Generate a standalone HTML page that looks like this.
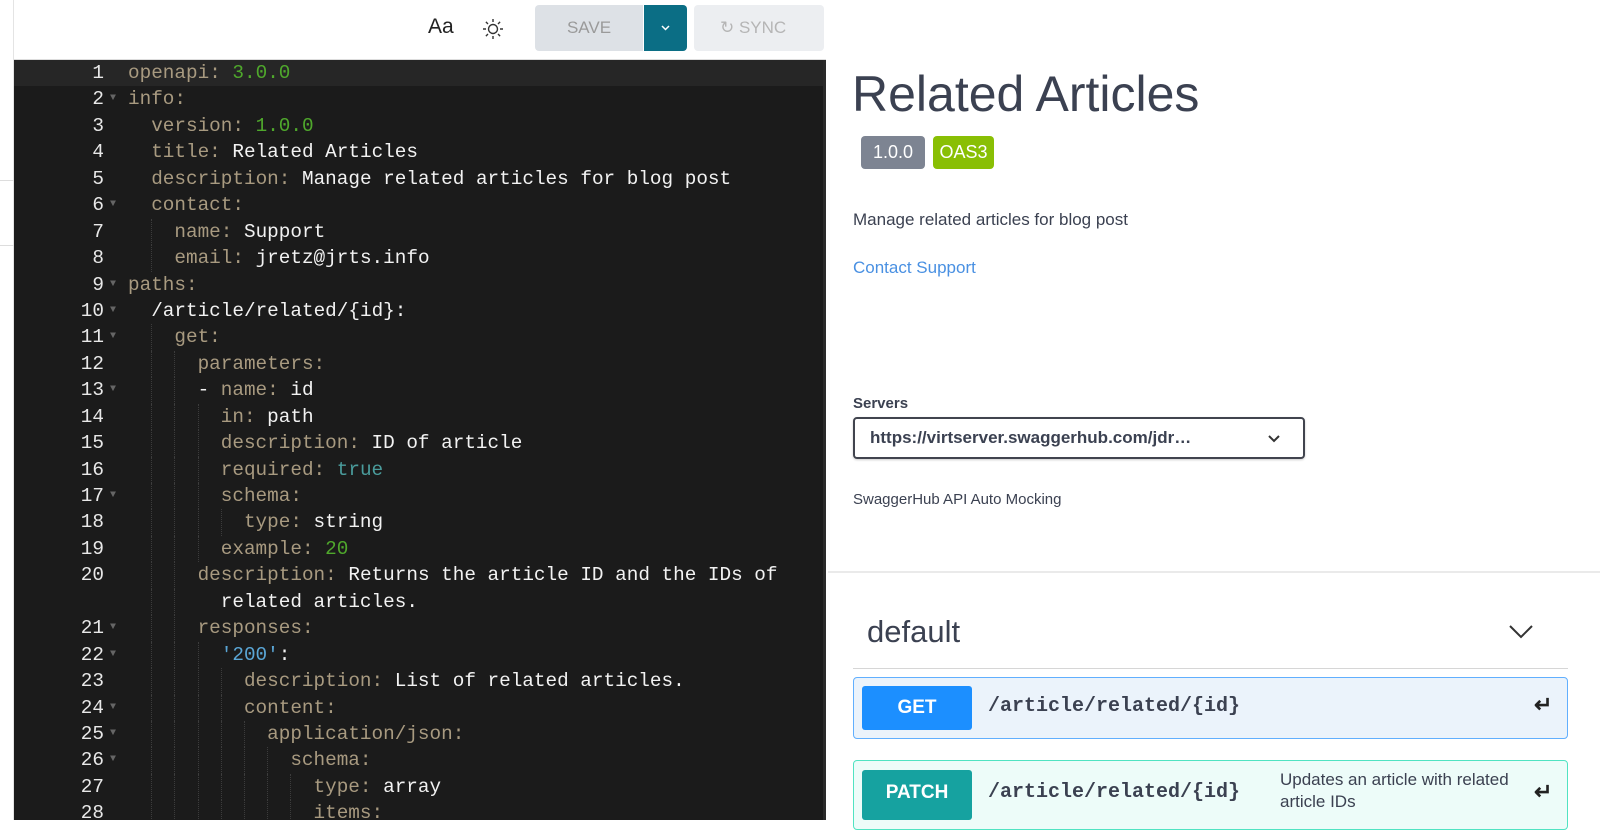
<!DOCTYPE html>
<html><head><meta charset="utf-8"><style>
*{margin:0;padding:0;box-sizing:border-box}
body{width:1600px;height:820px;overflow:hidden;background:#fff;font-family:"Liberation Sans",sans-serif;position:relative}
.strip{position:absolute;left:0;top:0;width:14px;height:820px;background:#fff;border-right:1px solid #e4e4e4}
.strip i{position:absolute;left:0;width:14px;height:1px;background:#ddd}
.tb{position:absolute;left:14px;top:0;width:812px;height:60px;background:#fff;border-bottom:1px solid #ddd}
.ed{position:absolute;left:14px;top:60px;width:812px;height:760px;background:#1b1b1b;border-right:3px solid #2a2a2a;overflow:hidden}
.rows{position:absolute;left:0;top:0;width:809px;font-family:"Liberation Mono",monospace;font-size:19.33px;line-height:26.45px;color:#f2f2f2}
.r{position:relative;height:26.45px;overflow:hidden}
.r.act{background:#262626}
.n{position:absolute;left:0;width:90px;text-align:right;color:#e8e8e8}
.f{position:absolute;left:96px;top:0;color:#666;font-size:10px}
.c{position:absolute;left:114px;top:0;white-space:pre;height:26.45px}
.k{color:#a89a80}.g{color:#4fa82c}.t{color:#4a9c9c}.b{color:#5aa6d6}
.ig{display:inline-block;width:23.2px;height:26.45px;vertical-align:top;border-left:1px dotted #3c3c3c}
.ig0{display:inline-block;width:23.2px;height:26.45px;vertical-align:top}
.rp{position:absolute;left:828px;top:0;width:772px;height:820px;background:#fff;color:#3b4151}
</style></head><body>
<div class="strip"><i style="top:180px"></i><i style="top:245px"></i></div>
<div class="tb">
 <div style="position:absolute;left:414px;top:15px;font-size:21px;color:#222">Aa</div>
 <svg style="position:absolute;left:467px;top:17px" width="24" height="24" viewBox="0 0 24 24" fill="none" stroke="#333" stroke-width="1.4"><circle cx="12" cy="12" r="4.5"/><path d="M12 2v3M12 19v3M2 12h3M19 12h3M4.9 4.9l2.1 2.1M17 17l2.1 2.1M4.9 19.1l2.1-2.1M17 7l2.1-2.1"/></svg>
 <div style="position:absolute;left:521px;top:5px;width:108px;height:46px;background:#dde1e6;border-radius:4px 0 0 4px;color:#9a9a9a;font-size:17px;text-align:center;line-height:46px">SAVE</div>
 <div style="position:absolute;left:630px;top:5px;width:43px;height:46px;background:#0b6e85;border-radius:0 4px 4px 0"><svg style="position:absolute;left:16px;top:19px" width="11" height="8" viewBox="0 0 11 8"><path d="M2 2l3.5 3.5L9 2" stroke="#fff" stroke-width="1.5" fill="none"/></svg></div>
 <div style="position:absolute;left:680px;top:5px;width:130px;height:46px;background:#eceef1;border-radius:4px;color:#b5b5b5;font-size:17px;line-height:46px;padding-left:26px">&#x21bb; SYNC</div>
</div>
<div class="ed">
<div class="rows">
<div class="r act"><span class="n">1</span><span class="c"><span class="k">openapi:</span> <span class="g">3.0.0</span></span></div>
<div class="r"><span class="n">2</span><span class="f">▼</span><span class="c"><span class="k">info:</span></span></div>
<div class="r"><span class="n">3</span><span class="c"><i class="ig0"></i><span class="k">version:</span> <span class="g">1.0.0</span></span></div>
<div class="r"><span class="n">4</span><span class="c"><i class="ig0"></i><span class="k">title:</span> Related Articles</span></div>
<div class="r"><span class="n">5</span><span class="c"><i class="ig0"></i><span class="k">description:</span> Manage related articles for blog post</span></div>
<div class="r"><span class="n">6</span><span class="f">▼</span><span class="c"><i class="ig0"></i><span class="k">contact:</span></span></div>
<div class="r"><span class="n">7</span><span class="c"><i class="ig0"></i><i class="ig"></i><span class="k">name:</span> Support</span></div>
<div class="r"><span class="n">8</span><span class="c"><i class="ig0"></i><i class="ig"></i><span class="k">email:</span> jretz@jrts.info</span></div>
<div class="r"><span class="n">9</span><span class="f">▼</span><span class="c"><span class="k">paths:</span></span></div>
<div class="r"><span class="n">10</span><span class="f">▼</span><span class="c"><i class="ig0"></i>/article/related/{id}:</span></div>
<div class="r"><span class="n">11</span><span class="f">▼</span><span class="c"><i class="ig0"></i><i class="ig"></i><span class="k">get:</span></span></div>
<div class="r"><span class="n">12</span><span class="c"><i class="ig0"></i><i class="ig"></i><i class="ig"></i><span class="k">parameters:</span></span></div>
<div class="r"><span class="n">13</span><span class="f">▼</span><span class="c"><i class="ig0"></i><i class="ig"></i><i class="ig"></i>- <span class="k">name:</span> id</span></div>
<div class="r"><span class="n">14</span><span class="c"><i class="ig0"></i><i class="ig"></i><i class="ig"></i><i class="ig"></i><span class="k">in:</span> path</span></div>
<div class="r"><span class="n">15</span><span class="c"><i class="ig0"></i><i class="ig"></i><i class="ig"></i><i class="ig"></i><span class="k">description:</span> ID of article</span></div>
<div class="r"><span class="n">16</span><span class="c"><i class="ig0"></i><i class="ig"></i><i class="ig"></i><i class="ig"></i><span class="k">required:</span> <span class="t">true</span></span></div>
<div class="r"><span class="n">17</span><span class="f">▼</span><span class="c"><i class="ig0"></i><i class="ig"></i><i class="ig"></i><i class="ig"></i><span class="k">schema:</span></span></div>
<div class="r"><span class="n">18</span><span class="c"><i class="ig0"></i><i class="ig"></i><i class="ig"></i><i class="ig"></i><i class="ig"></i><span class="k">type:</span> string</span></div>
<div class="r"><span class="n">19</span><span class="c"><i class="ig0"></i><i class="ig"></i><i class="ig"></i><i class="ig"></i><span class="k">example:</span> <span class="g">20</span></span></div>
<div class="r"><span class="n">20</span><span class="c"><i class="ig0"></i><i class="ig"></i><i class="ig"></i><span class="k">description:</span> Returns the article ID and the IDs of</span></div>
<div class="r"><span class="c"><i class="ig0"></i><i class="ig"></i><i class="ig"></i><i class="ig0"></i>related articles.</span></div>
<div class="r"><span class="n">21</span><span class="f">▼</span><span class="c"><i class="ig0"></i><i class="ig"></i><i class="ig"></i><span class="k">responses:</span></span></div>
<div class="r"><span class="n">22</span><span class="f">▼</span><span class="c"><i class="ig0"></i><i class="ig"></i><i class="ig"></i><i class="ig"></i><span class="b">'200'</span>:</span></div>
<div class="r"><span class="n">23</span><span class="c"><i class="ig0"></i><i class="ig"></i><i class="ig"></i><i class="ig"></i><i class="ig"></i><span class="k">description:</span> List of related articles.</span></div>
<div class="r"><span class="n">24</span><span class="f">▼</span><span class="c"><i class="ig0"></i><i class="ig"></i><i class="ig"></i><i class="ig"></i><i class="ig"></i><span class="k">content:</span></span></div>
<div class="r"><span class="n">25</span><span class="f">▼</span><span class="c"><i class="ig0"></i><i class="ig"></i><i class="ig"></i><i class="ig"></i><i class="ig"></i><i class="ig"></i><span class="k">application/json:</span></span></div>
<div class="r"><span class="n">26</span><span class="f">▼</span><span class="c"><i class="ig0"></i><i class="ig"></i><i class="ig"></i><i class="ig"></i><i class="ig"></i><i class="ig"></i><i class="ig"></i><span class="k">schema:</span></span></div>
<div class="r"><span class="n">27</span><span class="c"><i class="ig0"></i><i class="ig"></i><i class="ig"></i><i class="ig"></i><i class="ig"></i><i class="ig"></i><i class="ig"></i><i class="ig"></i><span class="k">type:</span> array</span></div>
<div class="r"><span class="n">28</span><span class="c"><i class="ig0"></i><i class="ig"></i><i class="ig"></i><i class="ig"></i><i class="ig"></i><i class="ig"></i><i class="ig"></i><i class="ig"></i><span class="k">items:</span></span></div>
</div></div>
<div class="rp">
 <div style="position:absolute;left:24px;top:64px;font-size:50px;color:#3b4151;line-height:60px">Related Articles</div>
 <div style="position:absolute;left:33px;top:136px;width:64px;height:33px;background:#7d8492;border-radius:4px;color:#fff;font-size:18px;line-height:33px;text-align:center">1.0.0</div>
 <div style="position:absolute;left:105px;top:136px;width:61px;height:33px;background:#89bf04;border-radius:4px;color:#fff;font-size:18px;line-height:33px;text-align:center">OAS3</div>
 <div style="position:absolute;left:25px;top:210px;font-size:17px">Manage related articles for blog post</div>
 <div style="position:absolute;left:25px;top:258px;font-size:17px;color:#4990e2">Contact Support</div>
 <div style="position:absolute;left:25px;top:395px;font-size:15px;font-weight:bold">Servers</div>
 <div style="position:absolute;left:25px;top:417px;width:452px;height:42px;border:2px solid #41444e;border-radius:4px;box-shadow:0 1px 2px rgba(0,0,0,.2);font-size:17px;font-weight:bold;line-height:38px;padding-left:15px">https://virtserver.swaggerhub.com/jdr…<svg style="position:absolute;left:412px;top:15px" width="14" height="9" viewBox="0 0 14 9"><path d="M2 2l5 5 5-5" stroke="#333" stroke-width="2" fill="none"/></svg></div>
 <div style="position:absolute;left:25px;top:491px;font-size:15px">SwaggerHub API Auto Mocking</div>
 <div style="position:absolute;left:0;top:571px;width:772px;height:2px;background:#eaeaea"></div>
 <div style="position:absolute;left:39px;top:614px;font-size:31px">default</div>
 <svg style="position:absolute;left:680px;top:623px" width="26" height="16" viewBox="0 0 26 16"><path d="M2 3l11 11L24 3" stroke="#333" stroke-width="2" fill="none"/></svg>
 <div style="position:absolute;left:25px;top:668px;width:715px;height:1px;background:#d6d6d6"></div>
 <div style="position:absolute;left:25px;top:677px;width:715px;height:62px;border:1px solid #61affe;background:#ebf3fb;border-radius:4px">
  <div style="position:absolute;left:8px;top:8px;width:110px;height:44px;background:#1c8fff;border-radius:3px;color:#fff;font-weight:bold;font-size:19px;line-height:44px;text-align:center">GET</div>
  <div style="position:absolute;left:134px;top:17px;font-family:'Liberation Mono',monospace;font-weight:bold;font-size:20px;color:#3b4151">/article/related/{id}</div>
  <div style="position:absolute;left:680px;top:14px;font-size:22px;font-weight:bold;color:#222">&#x21b5;</div>
 </div>
 <div style="position:absolute;left:25px;top:760px;width:715px;height:70px;border:1px solid #50e3c2;background:#edfcf9;border-radius:4px">
  <div style="position:absolute;left:8px;top:9px;width:110px;height:50px;background:#16a2a0;border-radius:3px;color:#fff;font-weight:bold;font-size:19px;line-height:46px;text-align:center">PATCH</div>
  <div style="position:absolute;left:134px;top:20px;font-family:'Liberation Mono',monospace;font-weight:bold;font-size:20px;color:#3b4151">/article/related/{id}</div>
  <div style="position:absolute;left:426px;top:8px;font-size:17px;color:#3b4151;width:250px;line-height:22px">Updates an article with related article IDs</div>
  <div style="position:absolute;left:680px;top:18px;font-size:22px;font-weight:bold;color:#222">&#x21b5;</div>
 </div>
</div>
</body></html>
